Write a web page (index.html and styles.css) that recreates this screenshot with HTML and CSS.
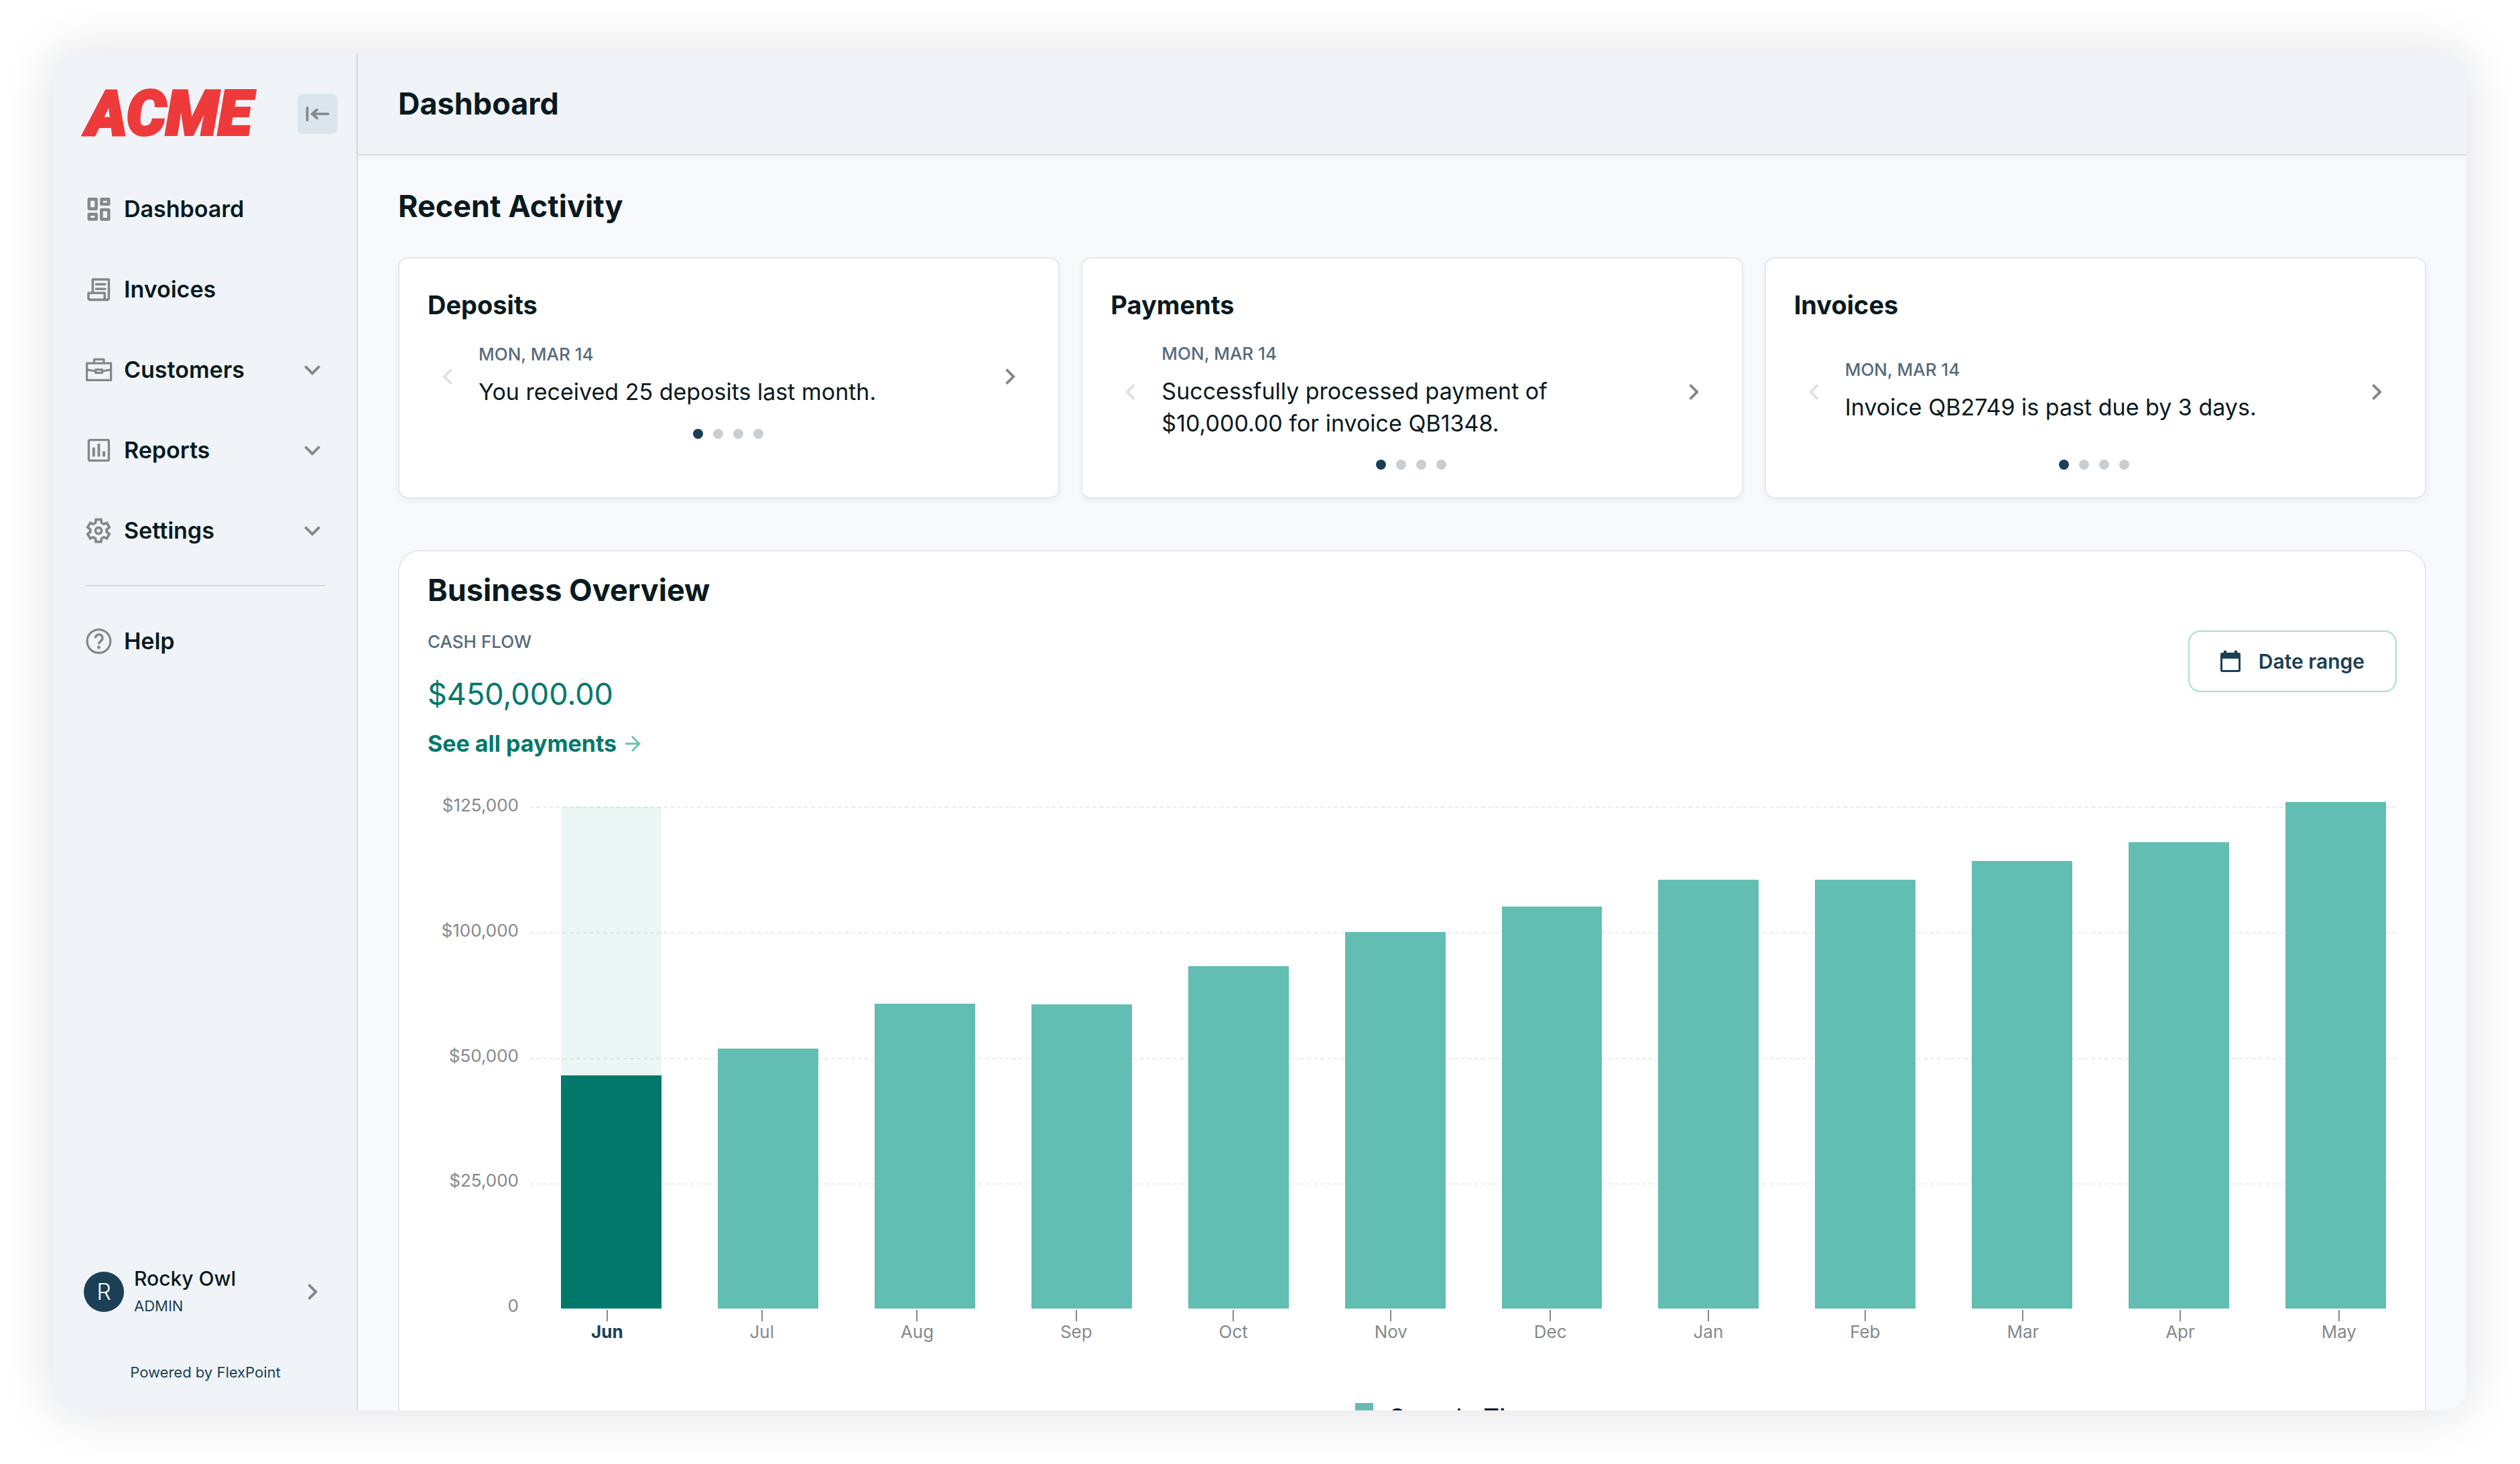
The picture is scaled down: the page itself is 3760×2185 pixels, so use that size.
FILE: index.html
```html
<!DOCTYPE html>
<html lang="en">
<head>
    <meta charset="UTF-8">
    <meta name="viewport" content="width=device-width, initial-scale=1.0">
    <title>Dashboard - FlexPoint</title>
    <link rel="stylesheet" href="styles.css">
</head>
<body>
    <div class="app">
        <aside class="sidebar">
            <div class="brand">
                <a class="logo" href="#">ACME</a>
                <button class="collapse-btn" aria-label="Collapse menu">
                    <svg class="icon" viewBox="0 0 48 48" fill="none" stroke="currentColor" stroke-width="4" stroke-linecap="round"><path d="M7 14v20M41 24H15M23 17l-8 7 8 7"/></svg>
                </button>
            </div>

            <nav class="nav">
                <a class="nav-item" href="#">
                    <svg class="icon" viewBox="0 0 24 24" fill="none" stroke="currentColor" stroke-width="2.3" stroke-linejoin="round"><path d="M4.9 4.7h5.4v7.1H4.9zM14.2 4.7h5.4v3.7h-5.4zM4.9 15.9h5.4v3.7H4.9zM14.2 12.5h5.4v7.1h-5.4z"/></svg>
                    <span>Dashboard</span>
                </a>
                <a class="nav-item" href="#">
                    <svg class="icon" viewBox="0 0 24 24" fill="none" stroke="currentColor" stroke-width="1.8" stroke-linecap="round" stroke-linejoin="round"><path d="M7.7 14.6V4.5h12v14a1.2 1.2 0 0 1-1.2 1.2H5.7a1.2 1.2 0 0 1-1.2-1.2v-3.9h12.1v3.9c0 .7.6 1.2 1.5 1.2M10.2 8.1h6.7M10.2 11.6h6.7"/></svg>
                    <span>Invoices</span>
                </a>
                <a class="nav-item" href="#">
                    <svg class="icon" viewBox="0 0 24 24" fill="none" stroke="currentColor" stroke-width="1.6" stroke-linejoin="round"><path d="M3.3 7.1h18v12.6h-18zM8.7 7.1V4.2h7.3v2.9M3.3 11.8l6.4 1.2M21.3 11.8 14.9 13M9.8 11.8h5v2.4h-5z"/></svg>
                    <span>Customers</span>
                    <svg class="icon arrow" viewBox="0 0 24 24"><path d="M7.4 8.6 12 13.2l4.6-4.6L18 10l-6 6-6-6z"/></svg>
                </a>
                <a class="nav-item" href="#">
                    <svg class="icon" viewBox="0 0 24 24" fill="none" stroke="currentColor" stroke-width="1.7"><rect x="4.7" y="4.3" width="15" height="15.4" rx="1"/><path stroke-width="2" d="M8.4 10v6.7M12.2 7.1v9.6M16 12.8v3.9"/></svg>
                    <span>Reports</span>
                    <svg class="icon arrow" viewBox="0 0 24 24"><path d="M7.4 8.6 12 13.2l4.6-4.6L18 10l-6 6-6-6z"/></svg>
                </a>
                <a class="nav-item" href="#">
                    <svg class="icon" viewBox="-12 -12 24 24" fill="none" stroke="currentColor" stroke-width="1.9"><path d="M-1.9-8.3h3.8l.4 2.5 1.6.9 2.3-.9 1.9 3.3-2 1.6V.9l2 1.6-1.9 3.3-2.3-.9-1.6.9-.4 2.5h-3.8l-.4-2.5-1.6-.9-2.3.9-1.9-3.3 2-1.6V-.9l-2-1.6 1.9-3.3 2.3.9 1.6-.9z"/><circle r="2.3"/></svg>
                    <span>Settings</span>
                    <svg class="icon arrow" viewBox="0 0 24 24"><path d="M7.4 8.6 12 13.2l4.6-4.6L18 10l-6 6-6-6z"/></svg>
                </a>
                <hr class="nav-divider">
                <a class="nav-item" href="#">
                    <svg class="icon" viewBox="0 0 24 24" fill="none" stroke="currentColor" stroke-width="1.6"><circle cx="12.2" cy="12" r="8.7"/><path stroke-width="1.8" d="M9.7 9.7a2.6 2.6 0 1 1 4.4 1.8c-1 .9-1.9 1.3-1.9 2.8"/><circle cx="12.2" cy="16.6" r="1.2" fill="currentColor" stroke="none"/></svg>
                    <span>Help</span>
                </a>
            </nav>

            <button class="user">
                <span class="avatar">R</span>
                <span class="user-info">
                    <span class="user-name">Rocky Owl</span>
                    <span class="user-role">ADMIN</span>
                </span>
                <svg class="icon arrow" viewBox="0 0 24 24"><path d="M8.6 16.6 13.2 12 8.6 7.4 10 6l6 6-6 6z"/></svg>
            </button>
            <p class="powered">Powered by FlexPoint</p>
        </aside>

        <main class="main">
            <header class="header">
                <h1>Dashboard</h1>
            </header>

            <div class="content">
                <h2>Recent Activity</h2>
                <section class="cards">
                    <article class="card">
                        <h3>Deposits</h3>
                        <div class="slide slide-short">
                            <button class="slide-btn" aria-label="Previous" disabled><svg class="icon" viewBox="0 0 24 24"><path d="M15.4 7.4 14 6l-6 6 6 6 1.4-1.4L10.8 12z"/></svg></button>
                            <div class="slide-text">
                                <p class="label">MON, MAR 14</p>
                                <p>You received 25 deposits last month.</p>
                            </div>
                            <button class="slide-btn" aria-label="Next"><svg class="icon" viewBox="0 0 24 24"><path d="M8.6 16.6 13.2 12 8.6 7.4 10 6l6 6-6 6z"/></svg></button>
                        </div>
                        <div class="dots"><i class="active"></i><i></i><i></i><i></i></div>
                    </article>
                    <article class="card">
                        <h3>Payments</h3>
                        <div class="slide">
                            <button class="slide-btn" aria-label="Previous" disabled><svg class="icon" viewBox="0 0 24 24"><path d="M15.4 7.4 14 6l-6 6 6 6 1.4-1.4L10.8 12z"/></svg></button>
                            <div class="slide-text">
                                <p class="label">MON, MAR 14</p>
                                <p>Successfully processed payment of $10,000.00 for invoice QB1348.</p>
                            </div>
                            <button class="slide-btn" aria-label="Next"><svg class="icon" viewBox="0 0 24 24"><path d="M8.6 16.6 13.2 12 8.6 7.4 10 6l6 6-6 6z"/></svg></button>
                        </div>
                        <div class="dots"><i class="active"></i><i></i><i></i><i></i></div>
                    </article>
                    <article class="card">
                        <h3>Invoices</h3>
                        <div class="slide">
                            <button class="slide-btn" aria-label="Previous" disabled><svg class="icon" viewBox="0 0 24 24"><path d="M15.4 7.4 14 6l-6 6 6 6 1.4-1.4L10.8 12z"/></svg></button>
                            <div class="slide-text">
                                <p class="label">MON, MAR 14</p>
                                <p>Invoice QB2749 is past due by 3 days.</p>
                            </div>
                            <button class="slide-btn" aria-label="Next"><svg class="icon" viewBox="0 0 24 24"><path d="M8.6 16.6 13.2 12 8.6 7.4 10 6l6 6-6 6z"/></svg></button>
                        </div>
                        <div class="dots"><i class="active"></i><i></i><i></i><i></i></div>
                    </article>
                </section>

                <section class="overview">
                    <h2>Business Overview</h2>
                    <div class="overview-top">
                        <div>
                            <p class="label">CASH FLOW</p>
                            <p class="amount">$450,000.00</p>
                            <a class="see-all" href="#">See all payments
                                <svg class="see-arrow" viewBox="0 0 24 28" fill="none" stroke="currentColor" stroke-width="3"><path d="M1 14h21M11 3l11 11-11 11"/></svg>
                            </a>
                        </div>
                        <button class="date-btn">
                            <svg class="date-icon" viewBox="0 0 30 34"><path fill="currentColor" fill-rule="evenodd" d="M5 1h4v3h12V1h4v3h2a3 3 0 0 1 3 3v23a3 3 0 0 1-3 3H3a3 3 0 0 1-3-3V7a3 3 0 0 1 3-3h2zM3 13v17h24V13z"/></svg>
                            Date range
                        </button>
                    </div>

                    <div class="chart">
                        <ul class="y-axis">
                            <li>$125,000</li>
                            <li>$100,000</li>
                            <li>$50,000</li>
                            <li>$25,000</li>
                            <li>0</li>
                        </ul>
                        <div class="plot">
                            <div class="grid"><i></i><i></i><i></i><i></i></div>
                            <div class="bars">
                                <div class="track"><div class="bar current" style="height: 46.4%"></div></div>
                                <div class="bar" style="height: 51.8%"></div>
                                <div class="bar" style="height: 60.8%"></div>
                                <div class="bar" style="height: 60.6%"></div>
                                <div class="bar" style="height: 68.2%"></div>
                                <div class="bar" style="height: 75%"></div>
                                <div class="bar" style="height: 80.1%"></div>
                                <div class="bar" style="height: 85.4%"></div>
                                <div class="bar" style="height: 85.4%"></div>
                                <div class="bar" style="height: 89.2%"></div>
                                <div class="bar" style="height: 92.9%"></div>
                                <div class="bar" style="height: 101%"></div>
                            </div>
                        </div>
                        <ul class="x-axis">
                            <li class="current">Jun</li>
                            <li>Jul</li>
                            <li>Aug</li>
                            <li>Sep</li>
                            <li>Oct</li>
                            <li>Nov</li>
                            <li>Dec</li>
                            <li>Jan</li>
                            <li>Feb</li>
                            <li>Mar</li>
                            <li>Apr</li>
                            <li>May</li>
                        </ul>
                        <p class="legend"><i></i>Sample Time</p>
                    </div>
                </section>
            </div>
        </main>
    </div>
</body>
</html>
```

FILE: styles.css
```css
* {
    box-sizing: border-box;
    margin: 0;
    padding: 0;
}
body {
    font-family: Inter, "Liberation Sans", sans-serif;
    font-size: 34px;
    line-height: 48px;
    color: #0a1a20;
    background: #fff;
}
a {
    color: inherit;
    text-decoration: none;
}
button {
    font: inherit;
    color: inherit;
    background: none;
    border: none;
    cursor: pointer;
}
ul {
    list-style: none;
}
h1, h2 {
    font-size: 45px;
    line-height: 60px;
    font-weight: 700;
}
h3 {
    font-size: 38px;
    line-height: 48px;
    font-weight: 700;
}
.icon {
    display: block;
    flex: none;
    width: 48px;
    height: 48px;
    color: #84888b;
}
.arrow, .slide-btn .icon {
    fill: currentColor;
}
.app {
    display: flex;
    height: calc(100vh - 160px);
    margin: 80px;
    overflow: hidden;
    border-radius: 32px;
    background: #f8f9fd;
    box-shadow: 0 0 80px rgba(20, 30, 50, 0.14);
}

/* sidebar */
.sidebar {
    display: flex;
    flex-direction: column;
    flex: none;
    width: 454px;
    padding: 44px 42px 32px 43px;
    background: #f0f4f8;
    border-right: 2px solid #d8dcdf;
}
.brand {
    display: flex;
    justify-content: space-between;
    align-items: center;
    height: 92px;
    margin-right: -14px;
}
.logo {
    padding-left: 6px;
    font-family: Roboto, "Liberation Sans", sans-serif;
    font-size: 92px;
    line-height: 88px;
    font-weight: 900;
    font-style: italic;
    color: #ee3a3a;
    -webkit-text-stroke: 4px #ee3a3a;
}
.collapse-btn {
    display: grid;
    place-items: center;
    width: 60px;
    height: 60px;
    border-radius: 8px;
    background: #dae6eb;
}
.collapse-btn .icon {
    width: 44px;
    height: 44px;
}
.nav {
    display: flex;
    flex-direction: column;
    gap: 60px;
    margin-top: 66px;
}
.nav-item {
    display: flex;
    align-items: center;
    gap: 14px;
    height: 60px;
    font-weight: 600;
}
.nav-item .arrow {
    margin-left: auto;
}
.nav-divider {
    margin: -9px 4px -8px;
    border: none;
    border-top: 2px solid #d5dadd;
}
.user {
    display: flex;
    align-items: center;
    margin-top: auto;
    text-align: left;
}
.avatar {
    width: 60px;
    height: 60px;
    margin: 0 15px 0 2px;
    border-radius: 50%;
    background: #1b3f55;
    color: #fff;
    font-weight: 300;
    line-height: 60px;
    text-align: center;
}
.user-info {
    display: flex;
    flex-direction: column;
}
.user-name {
    font-size: 30px;
    line-height: 42px;
    font-weight: 500;
}
.user-role {
    font-size: 22px;
    line-height: 40px;
    color: #1b3f55;
}
.user .arrow {
    margin-left: auto;
}
.powered {
    margin-top: 54px;
    font-size: 22px;
    line-height: 50px;
    text-align: center;
    color: #1b3f55;
}

/* main column */
.main {
    flex: 1;
    min-width: 0;
}
.header {
    display: flex;
    align-items: center;
    height: 152px;
    padding: 0 60px;
    background: #f0f4f8;
    border-bottom: 2px solid #d8dcdf;
    box-shadow: 0 2px 12px rgba(20, 30, 50, 0.05);
}
.content {
    padding: 46px 60px 0;
}

/* recent activity */
.cards {
    display: grid;
    grid-template-columns: repeat(3, 1fr);
    gap: 32px;
    margin-top: 46px;
}
.card {
    padding: 45px 45px 0 42px;
    height: 360px;
    background: #fff;
    border: 2px solid #e6e8eb;
    border-radius: 15px;
    box-shadow: 0 4px 10px rgba(20, 30, 50, 0.05);
}
.slide {
    display: flex;
    align-items: center;
    min-height: 148px;
    margin: 32px 3px 27px 6px;
}
.slide-short {
    min-height: 102px;
}
.slide-btn {
    flex: none;
}
.slide-btn:disabled .icon {
    color: #dfe1e3;
}
.slide-text {
    flex: 1;
    padding: 0 120px 3px 22px;
}
.label {
    font-size: 26px;
    line-height: 34px;
    font-weight: 500;
    color: #566b7c;
}
.slide-text .label {
    margin-bottom: 15px;
}
.dots {
    display: flex;
    justify-content: center;
    gap: 15px;
}
.dots i {
    width: 15px;
    height: 15px;
    border-radius: 50%;
    background: #c8ced2;
}
.dots .active {
    background: #1b3f55;
}

/* business overview */
.overview {
    margin-top: 77px;
    padding: 28px 42px;
    background: #fff;
    border: 2px solid #e6e8eb;
    border-radius: 32px;
}
.overview-top {
    display: flex;
    justify-content: space-between;
    align-items: flex-start;
    margin-top: 30px;
}
.amount {
    margin: 31px 0 20px;
    font-size: 45px;
    line-height: 60px;
    color: #00796b;
}
.see-all {
    display: flex;
    align-items: center;
    gap: 12px;
    font-weight: 700;
    color: #00796b;
}
.see-arrow {
    width: 24px;
    height: 28px;
    color: #6cc2b0;
}
.date-btn {
    display: flex;
    align-items: center;
    gap: 27px;
    height: 92px;
    padding: 0 46px;
    border: 2px solid #aaddd0;
    border-radius: 18px;
    font-size: 30px;
    font-weight: 600;
    color: #1b3f55;
}
.date-icon {
    width: 30px;
    height: 34px;
}
.chart {
    display: grid;
    grid-template-columns: 136px 1fr;
    column-gap: 16px;
    margin-top: 70px;
    font-size: 26px;
    line-height: 32px;
    color: #85898c;
}
.y-axis {
    display: flex;
    flex-direction: column;
    justify-content: space-between;
    margin: -18px 0 -12px;
    text-align: right;
}
.plot {
    display: grid;
    height: 749px;
}
.grid, .bars {
    grid-area: 1 / 1;
}
.grid {
    display: grid;
    grid-template-rows: repeat(4, 1fr);
}
.grid i {
    border-top: 2px dashed #ebedee;
}
.bars {
    display: flex;
    align-items: flex-end;
    gap: 84px;
    padding: 0 16px 0 47px;
}
.track, .bars > .bar {
    flex: 1;
}
.track {
    display: flex;
    align-items: flex-end;
    height: 100%;
    background: rgba(0, 150, 125, 0.08);
}
.bar {
    width: 100%;
    background: #62bdb2;
}
.bar.current {
    background: #00796b;
}
.x-axis {
    grid-column: 2;
    display: flex;
    justify-content: space-between;
    padding: 2px 60px 0 92px;
}
.x-axis li::before {
    content: "";
    display: block;
    width: 2px;
    height: 17px;
    margin: 0 auto;
    background: #85898c;
}
.x-axis .current {
    font-weight: 700;
    color: #1b3f55;
}
.legend {
    grid-column: 2;
    display: flex;
    justify-content: center;
    gap: 24px;
    margin-top: 90px;
    padding-right: 44px;
    font-size: 37px;
    line-height: 44px;
    color: #0a1a20;
}
.legend i {
    width: 27px;
    background: #62bdb2;
}
```
